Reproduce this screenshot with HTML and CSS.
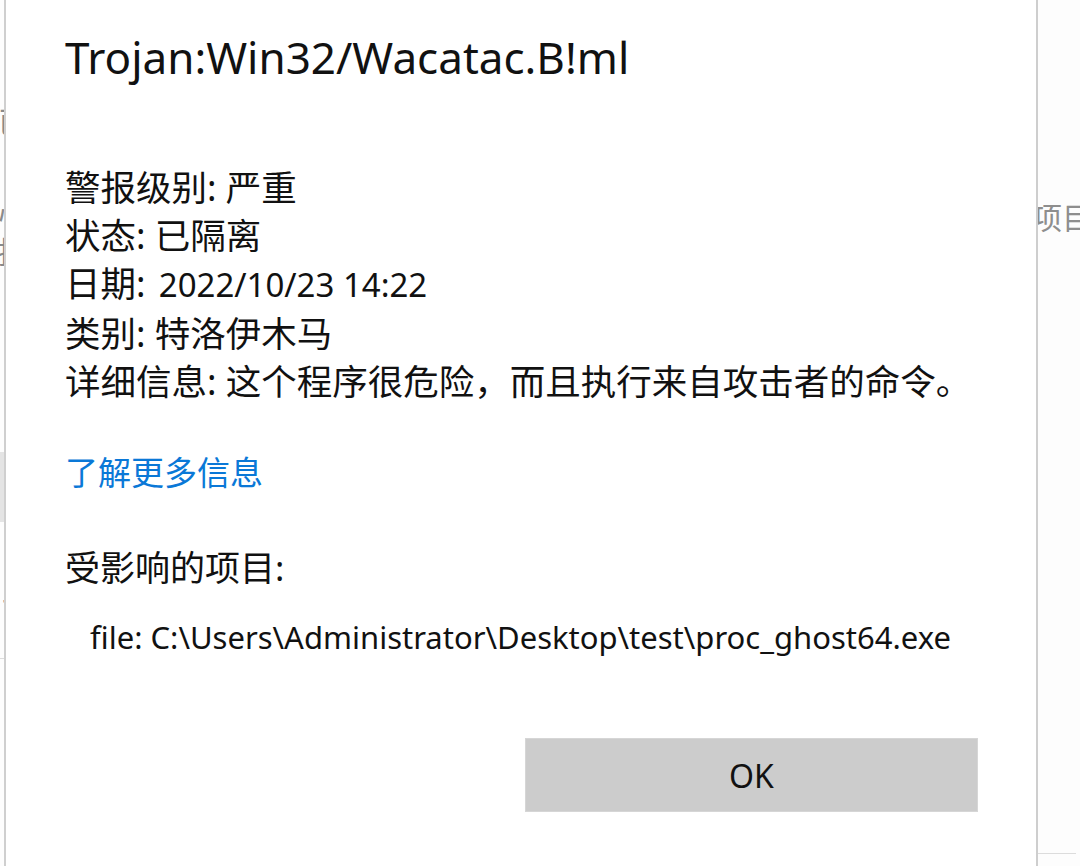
FILE: index.html
```html
<!DOCTYPE html>
<html lang="zh-CN">
<head>
  <meta charset="UTF-8" />
  <meta name="viewport" content="width=device-width, initial-scale=1" />
  <title>Windows 安全中心</title>
  <link rel="stylesheet" href="styles.css">
</head>
<body>
  <!-- Window behind the dialog: only its edges peek out -->
  <div class="backdrop">
    <aside class="bg-left">
      <span class="frag frag-a">已</span>
      <span class="frag frag-b">心</span>
      <span class="frag frag-c">捷</span>
      <div class="bg-bar"></div>
      <span class="frag frag-d">T</span>
      <span class="frag frag-e">2</span>
      <div class="bg-rule"></div>
    </aside>
    <aside class="bg-right">
      <span class="bg-label">项目</span>
      <div class="bg-rule bg-rule-right"></div>
    </aside>
  </div>

  <!-- Threat details dialog -->
  <section class="dialog">
    <h1 class="title">Trojan:Win32/Wacatac.B!ml</h1>
    <ul class="info">
      <li>警报级别: 严重</li>
      <li>状态: 已隔离</li>
      <li>日期: <span class="num">2022/10/23 14:22</span></li>
      <li>类别: 特洛伊木马</li>
      <li>详细信息: 这个程序很危险，而且执行来自攻击者的命令。</li>
    </ul>
    <a class="more" href="#">了解更多信息</a>
    <p class="affected">受影响的项目:</p>
    <p class="file">file: C:\Users\Administrator\Desktop\test\proc_ghost64.exe</p>
    <div class="actions">
      <button class="ok-btn">OK</button>
    </div>
  </section>
</body>
</html>
```

FILE: styles.css
```css
/* Reset & Global Styles */
html, body {
  margin: 0;
  padding: 0;
  width: 100%;
  height: 100%;
}
body {
  background-color: #fdfdfd;
  color: #111;
  font-family: "Noto Sans", "Noto Sans CJK SC", sans-serif;
  overflow: hidden;
  position: relative;
}
/* Background window */
.backdrop {
  display: flex;
  justify-content: space-between;
  height: 866px;
}
.bg-left {
  width: 6px;
  overflow: hidden;
  display: flex;
  flex-direction: column;
  align-items: flex-end;
  font-family: "Noto Sans CJK SC", sans-serif;
  color: #8a8a8a;
}
.frag {
  display: block;
  font-size: 30px;
  line-height: 40px;
  margin-right: -22px;
}
.frag-a {
  margin-top: 100px;
}
.frag-b {
  margin-top: 50px;
}
.frag-d {
  margin-top: 74px;
  margin-right: -14px;
  line-height: 30px;
  font-family: "Noto Sans", sans-serif;
}
.frag-e {
  margin-top: 10px;
  margin-right: -12px;
  font-family: "Noto Sans", sans-serif;
  font-size: 22px;
  line-height: 22px;
}
.bg-bar {
  width: 6px;
  height: 70px;
  margin-top: 182px;
  background: #e4e4e4;
}
.bg-rule {
  width: 100%;
  height: 1px;
  background: #dcdcdc;
}
.bg-right {
  width: 44px;
  display: flex;
  flex-direction: column;
}
.bg-label {
  margin-top: 196px;
  margin-left: -4px;
  font-family: "Noto Sans CJK SC", sans-serif;
  font-size: 30px;
  line-height: 40px;
  color: #8e8e8e;
  white-space: nowrap;
}
.bg-rule-right {
  margin-top: auto;
  margin-bottom: 12px;
  width: 40px;
}
/* Dialog */
.dialog {
  position: absolute;
  top: -10px;
  left: 4px;
  width: 1034px;
  height: 900px;
  box-sizing: border-box;
  padding: 37px 58px 0 59px;
  background: #fff;
  border-left: 2px solid #cfcfcf;
  border-right: 2px solid rgba(190, 190, 190, 0.75);
  display: flex;
  flex-direction: column;
  align-items: flex-start;
}
.title {
  margin: 0;
  font-size: 44px;
  font-weight: normal;
  line-height: 60px;
  color: #111;
}
.info {
  list-style: none;
  margin: 76px 0 0;
  padding: 0;
  font-size: 35.5px;
  line-height: 48px;
}
.num {
  font-size: 33px;
  margin-left: 4px;
}
.more {
  margin-top: 44px;
  font-size: 33px;
  line-height: 48px;
  color: #0a78d7;
  text-decoration: none;
}
.affected {
  margin: 47px 0 0;
  font-size: 35px;
  line-height: 48px;
}
.file {
  margin: 21px 0 0;
  padding-left: 25px;
  font-size: 31px;
  line-height: 48px;
}
.actions {
  align-self: stretch;
  display: flex;
  justify-content: flex-end;
  margin-top: 77px;
}
.ok-btn {
  width: 453px;
  height: 74px;
  background: #cccccc;
  border: 1px solid #d6d6d6;
  font-family: "Noto Sans", sans-serif;
  font-size: 32px;
  color: #111;
  cursor: pointer;
}
```
